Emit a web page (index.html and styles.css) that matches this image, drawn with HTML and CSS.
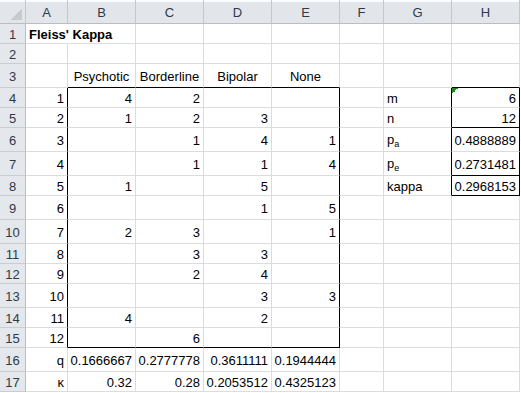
FILE: index.html
```html
<!DOCTYPE html>
<html>
<head>
<meta charset="utf-8">
<link rel="stylesheet" href="styles.css">
</head>
<body>
<div class="sheet">
  <div class="c hd corner"></div><div class="c hd">A</div><div class="c hd">B</div><div class="c hd">C</div><div class="c hd">D</div><div class="c hd">E</div><div class="c hd">F</div><div class="c hd">G</div><div class="c hd">H</div>

  <div class="c rh">1</div><div class="c title">Fleiss' Kappa</div><div class="c"></div><div class="c"></div><div class="c"></div><div class="c"></div><div class="c"></div><div class="c"></div><div class="c"></div>
  <div class="c rh">2</div><div class="c"></div><div class="c"></div><div class="c"></div><div class="c"></div><div class="c"></div><div class="c"></div><div class="c"></div><div class="c"></div>
  <div class="c rh">3</div><div class="c"></div><div class="c m bb">Psychotic</div><div class="c m bb">Borderline</div><div class="c m bb">Bipolar</div><div class="c m bb">None</div><div class="c"></div><div class="c"></div><div class="c bb"></div>

  <div class="c rh">4</div><div class="c r br">1</div><div class="c r">4</div><div class="c r">2</div><div class="c r"></div><div class="c r br"></div><div class="c"></div><div class="c br">m</div><div class="c r br gtri">6</div>
  <div class="c rh">5</div><div class="c r br">2</div><div class="c r">1</div><div class="c r">2</div><div class="c r">3</div><div class="c r br"></div><div class="c"></div><div class="c br">n</div><div class="c r br bb">12</div>
  <div class="c rh">6</div><div class="c r br">3</div><div class="c r"></div><div class="c r">1</div><div class="c r">4</div><div class="c r br">1</div><div class="c"></div><div class="c br"><span class="lbl">p<span class="sub">a</span></span></div><div class="c r br">0.4888889</div>
  <div class="c rh">7</div><div class="c r br">4</div><div class="c r"></div><div class="c r">1</div><div class="c r">1</div><div class="c r br">4</div><div class="c"></div><div class="c br"><span class="lbl">p<span class="sub">e</span></span></div><div class="c r br bb">0.2731481</div>
  <div class="c rh">8</div><div class="c r br">5</div><div class="c r">1</div><div class="c r"></div><div class="c r">5</div><div class="c r br"></div><div class="c"></div><div class="c br">kappa</div><div class="c r br bb">0.2968153</div>
  <div class="c rh">9</div><div class="c r br">6</div><div class="c r"></div><div class="c r"></div><div class="c r">1</div><div class="c r br">5</div><div class="c"></div><div class="c"></div><div class="c"></div>
  <div class="c rh">10</div><div class="c r br">7</div><div class="c r">2</div><div class="c r">3</div><div class="c r"></div><div class="c r br">1</div><div class="c"></div><div class="c"></div><div class="c"></div>
  <div class="c rh">11</div><div class="c r br">8</div><div class="c r"></div><div class="c r">3</div><div class="c r">3</div><div class="c r br"></div><div class="c"></div><div class="c"></div><div class="c"></div>
  <div class="c rh">12</div><div class="c r br">9</div><div class="c r"></div><div class="c r">2</div><div class="c r">4</div><div class="c r br"></div><div class="c"></div><div class="c"></div><div class="c"></div>
  <div class="c rh">13</div><div class="c r br">10</div><div class="c r"></div><div class="c r"></div><div class="c r">3</div><div class="c r br">3</div><div class="c"></div><div class="c"></div><div class="c"></div>
  <div class="c rh">14</div><div class="c r br">11</div><div class="c r">4</div><div class="c r"></div><div class="c r">2</div><div class="c r br"></div><div class="c"></div><div class="c"></div><div class="c"></div>
  <div class="c rh">15</div><div class="c r br">12</div><div class="c r bb"></div><div class="c r bb">6</div><div class="c r bb"></div><div class="c r br bb"></div><div class="c"></div><div class="c"></div><div class="c"></div>

  <div class="c rh">16</div><div class="c r">q</div><div class="c r">0.1666667</div><div class="c r">0.2777778</div><div class="c r">0.3611111</div><div class="c r">0.1944444</div><div class="c"></div><div class="c"></div><div class="c"></div>
  <div class="c rh">17</div><div class="c r">κ</div><div class="c r">0.32</div><div class="c r">0.28</div><div class="c r">0.2053512</div><div class="c r">0.4325123</div><div class="c"></div><div class="c"></div><div class="c"></div>
</div>
</body>
</html>
```

FILE: styles.css
```css
html, body {
  margin: 0;
  padding: 0;
  background: #ffffff;
  overflow: hidden;
}

body {
  font-family: "Liberation Sans", Arial, sans-serif;
  font-size: 13px;
  color: #000000;
}

.sheet {
  display: grid;
  grid-template-columns: 26px 42px 68px 68px 68px 68px 44px 68px 68px;
  grid-template-rows: 24px 20px 20px 24px 20px 20px 24px 24px 20px 24px 24px 20px 20px 24px 20px 20px 24px 20px 20px;
}

.c {
  box-sizing: border-box;
  border-right: 1px solid #dadcdd;
  border-bottom: 1px solid #dadcdd;
  display: flex;
  align-items: center;
  padding: 1px 3px 0;
  line-height: 15px;
  white-space: nowrap;
  min-width: 0;
}

.r { justify-content: flex-end; }
.m { justify-content: center; padding-left: 0; padding-right: 0; }

.hd {
  justify-content: center;
  background: linear-gradient(#fbfcfd 0 2px, #e2e6eb 2px);
  color: #2e3a48;
  border-right-color: #c3c8cf;
  border-bottom-color: #b8bec6;
}

.corner {
  background:
    linear-gradient(135deg, transparent 50%, #c6cad0 50%) no-repeat right 3px bottom 3px / 11px 11px,
    linear-gradient(#fbfcfd 0 2px, #e2e6eb 2px);
}

.rh {
  justify-content: center;
  background: #e4e7ec;
  color: #2e3a48;
  border-right-color: #b8bec6;
  border-bottom-color: #c8cdd4;
  padding-left: 0;
  padding-right: 0;
}

.title {
  font-weight: bold;
  overflow: visible;
  border-right-color: #ffffff;
}

.br { border-right-color: #000000; }
.bb { border-bottom-color: #000000; }

.gtri {
  background: linear-gradient(135deg, #1f8a1f 0 50%, transparent 50%) no-repeat 0 0 / 6px 6px;
}

.lbl {
  display: inline-block;
  line-height: 15px;
}

.sub {
  font-size: 9px;
  vertical-align: -3px;
  line-height: 1;
}
```
